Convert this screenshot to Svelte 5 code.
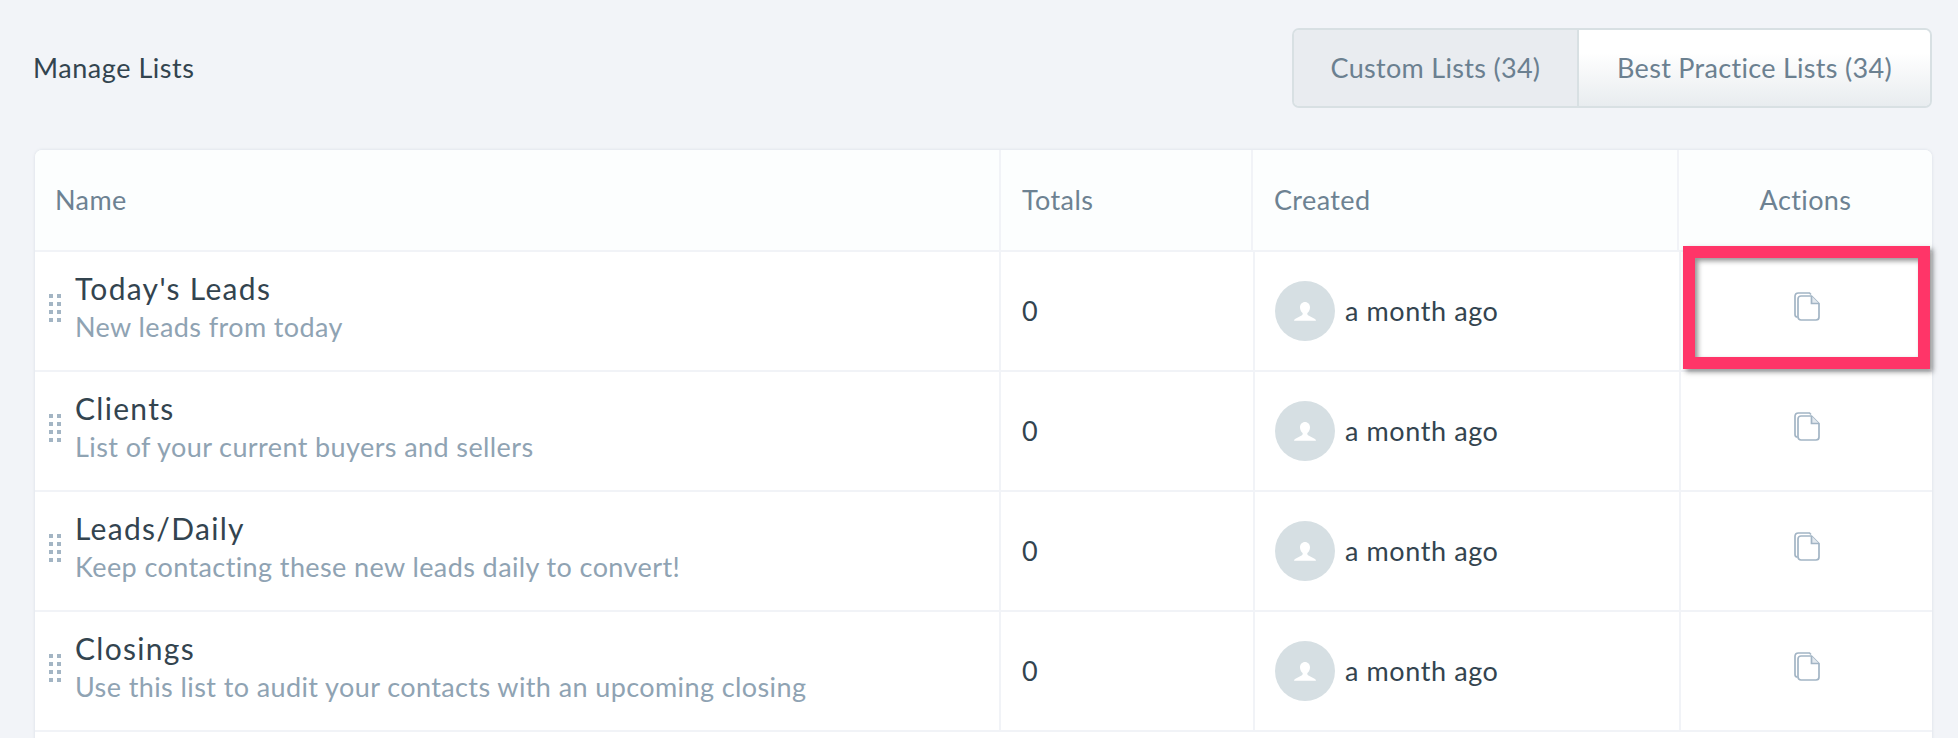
<script>
    let lists = [
        { name: "Today's Leads", desc: "New leads from today" },
        { name: "Clients", desc: "List of your current buyers and sellers" },
        { name: "Leads/Daily", desc: "Keep contacting these new leads daily to convert!" },
        { name: "Closings", desc: "Use this list to audit your contacts with an upcoming closing" }
    ];
</script>

<div class="page">
    <div class="top">
        <h1>Manage Lists</h1>
        <div class="tabs">
            <button class="tab active">Custom Lists (34)</button>
            <button class="tab">Best Practice Lists (34)</button>
        </div>
    </div>

    <div class="card">
        <div class="head">
            <div class="cell">Name</div>
            <div class="cell">Totals</div>
            <div class="cell">Created</div>
            <div class="cell center">Actions</div>
        </div>
        {#each lists as list}
        <div class="row">
            <div class="cell name">
                <div class="handle">
                    {#each Array(8) as _}
                    <span></span>
                    {/each}
                </div>
                <div class="text">
                    <p class="title">{list.name}</p>
                    <p class="desc">{list.desc}</p>
                </div>
            </div>
            <div class="cell total"><span>0</span></div>
            <div class="cell created">
                <div class="avatar">
                    <svg width="24" height="24" viewBox="0 0 24 24">
                        <path fill="#fff" d="M12 3c-2.900 0-5 2.300-5 5.300 0 2.400 1 4.500 2.600 5.700.3.900 0 1.800-.6 2.300L2 20c-.6.400-.9 1-1 1.800h22c-.1-.8-.4-1.400-1-1.800l-7-3.700c-.6-.5-.9-1.400-.6-2.300C16 12.800 17 10.700 17 8.300 17 5.300 14.900 3 12 3z"/>
                    </svg>
                </div>
                <span>a month ago</span>
            </div>
            <div class="cell center icon">
                <svg width="26" height="29" viewBox="0 0 26 29" fill="none" stroke="#a3b5c5" stroke-width="1.7">
                    <path d="M17 2.500 15.500 1H4.500C2.500 1 1 2.500 1 4.500v18C1 24 2 25 3.500 25"/>
                    <path d="M7 4h10.500L25 11.500V25c0 1.700-1.300 3-3 3H7c-1.700 0-3-1.300-3-3V7c0-1.700 1.300-3 3-3z" fill="#fff"/>
                    <path d="M17.500 4v7.500H25" fill="#e3e9ee"/>
                </svg>
            </div>
        </div>
        {/each}
        <div class="callout"></div>
    </div>
</div>

<style>
    :global(body){
        margin: 0;
        background-color: #f2f4f8;
        overflow: hidden;
    }
    .page{
        height: 738px;
        overflow: hidden;
        padding: 28px 26px 0 35px;
        box-sizing: border-box;
        font-family: Lato, "Open Sans", Arial, sans-serif;
    }
    .top{
        display: flex;
        justify-content: space-between;
        align-items: center;
        height: 80px;
    }
    h1{
        margin: 0 0 2px -2px;
        font-size: 27px;
        font-weight: 400;
        letter-spacing: 0.55px;
        color: #33444f;
    }
    .tabs{
        display: flex;
        height: 80px;
        box-sizing: border-box;
        border: 2px solid #d8e0e3;
        border-radius: 7px;
        overflow: hidden;
    }
    .tab{
        border: none;
        margin: 0;
        padding: 0 0 2px;
        font-family: inherit;
        font-size: 27px;
        letter-spacing: 0.3px;
        color: #6b8090;
        background: linear-gradient(#ffffff, #ffffff 30%, #e8ecef);
    }
    .tab:first-child{
        width: 285px;
    }
    .tab:last-child{
        width: 351px;
    }
    .active{
        background: #e9ecf0;
        border-right: 2px solid #d8e0e3;
    }
    .card{
        position: relative;
        margin-top: 42px;
        min-height: 640px;
        background-color: #fff;
        border-radius: 7px 7px 0 0;
        box-shadow: 0 0 3px rgba(180, 190, 205, 0.45);
    }
    .head, .row{
        display: grid;
        border-bottom: 2px solid #f1f3f7;
    }
    .head{
        grid-template-columns: 966px 252px 426px 1fr;
        height: 102px;
        box-sizing: border-box;
        background-color: #fcfefe;
        border-radius: 7px 7px 0 0;
        color: #6d8292;
        font-size: 27px;
        letter-spacing: 0.4px;
        line-height: 98px;
    }
    .head .cell:first-child{
        padding-left: 20px;
    }
    .row{
        grid-template-columns: 966px 254px 426px 1fr;
        height: 120px;
        box-sizing: border-box;
        color: #33444f;
    }
    .cell{
        display: flex;
        align-items: center;
        padding-left: 21px;
        border-right: 2px solid #f1f3f7;
        box-sizing: border-box;
    }
    .cell:last-child{
        border-right: none;
    }
    .center{
        justify-content: center;
        padding-left: 0;
    }
    .name{
        padding-left: 14px;
        gap: 15px;
    }
    .handle{
        display: grid;
        grid-template-columns: 4px 4px;
        grid-auto-rows: 4px;
        gap: 4px;
        margin-bottom: 6px;
    }
    .handle span{
        background-color: #a3b5c4;
    }
    .text{
        margin-left: -1px;
        padding-bottom: 9px;
    }
    p{
        margin: 0;
    }
    .title{
        font-size: 30px;
        line-height: 41px;
        letter-spacing: 1.3px;
    }
    .desc{
        font-size: 27px;
        line-height: 36px;
        letter-spacing: 0.4px;
        color: #8fa3b3;
    }
    .total, .created{
        font-size: 27px;
        letter-spacing: 0.6px;
    }
    .total span, .created span{
        padding-bottom: 2px;
    }
    .created{
        gap: 10px;
        padding-left: 20px;
    }
    .avatar{
        width: 60px;
        height: 60px;
        border-radius: 50%;
        background-color: #d6dfe3;
        display: flex;
        align-items: center;
        justify-content: center;
    }
    .icon{
        padding-bottom: 9px;
    }
    .callout{
        position: absolute;
        left: 1648px;
        top: 96px;
        width: 247px;
        height: 123px;
        box-sizing: border-box;
        border: 12px solid #ff3568;
        box-shadow: 3px 3px 5px rgba(60, 60, 60, 0.55), inset 3px 3px 5px rgba(60, 60, 60, 0.55);
    }
</style>
